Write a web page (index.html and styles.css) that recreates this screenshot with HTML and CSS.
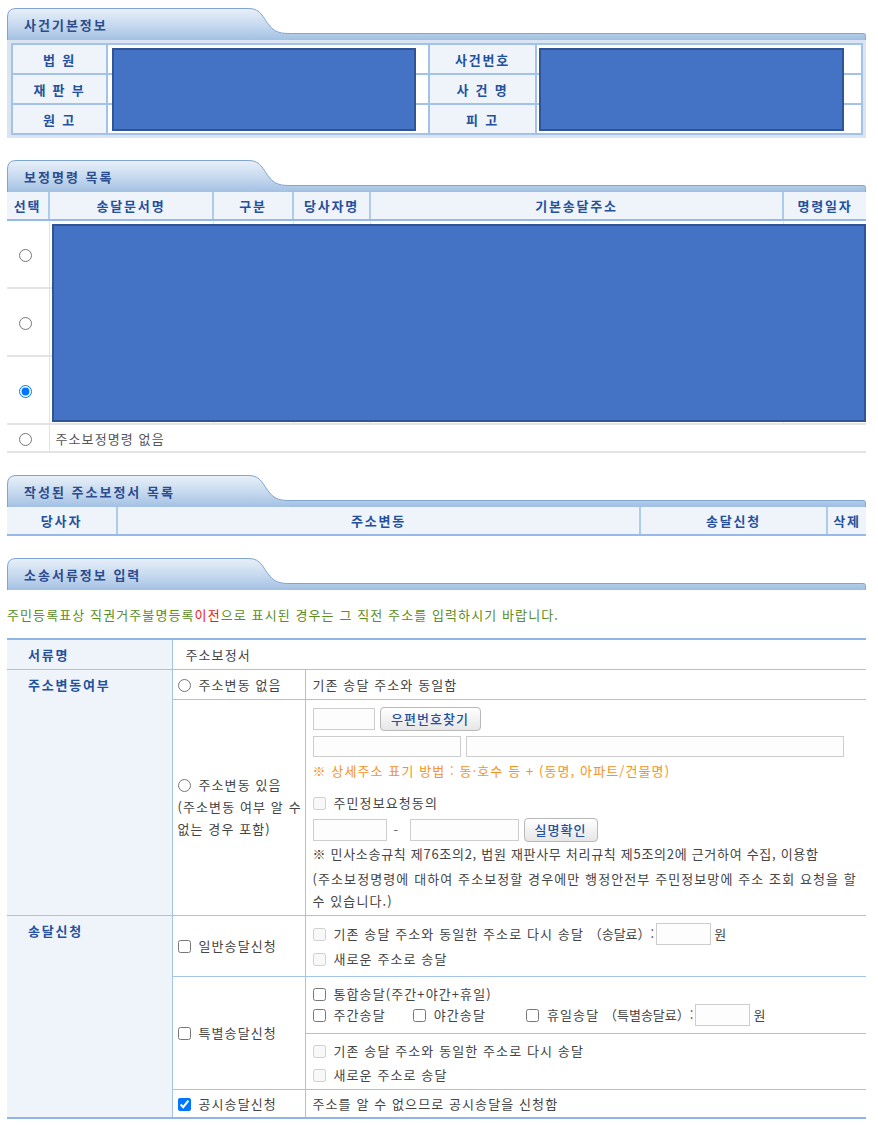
FILE: index.html
```html
<!DOCTYPE html>
<html lang="ko">
<head>
<meta charset="utf-8">
<title>주소보정서</title>
<link rel="stylesheet" href="styles.css">
</head>
<body>
<div class="page">

  <section class="sec">
    <div class="tabhead">
      <div class="tab">
        <svg width="282" height="32" viewBox="0 0 282 32"><defs><linearGradient id="tg1" x1="0" y1="0" x2="0" y2="1"><stop offset="0" stop-color="#e8f0f9"/><stop offset="0.55" stop-color="#c5d8ee"/><stop offset="1" stop-color="#a3c1e3"/></linearGradient></defs><path d="M0.5,32 V9 Q0.5,0.5 9,0.5 H242 C254,0.5 256,10 262,17 C266,22 270,25.5 282,25.5 V32 Z" fill="url(#tg1)"/><path d="M0.5,32 V9 Q0.5,0.5 9,0.5 H242 C254,0.5 256,10 262,17 C266,22 270,25.5 282,25.5" fill="none" stroke="#7fa5d0"/></svg>
        <span class="tab-title">사건기본정보</span>
      </div>
      <div class="bar"></div>
    </div>
    <div class="info-wrap">
      <table class="info">
        <colgroup><col class="c95"><col class="c322"><col class="c107"><col></colgroup>
        <tr><th>법 원</th><td></td><th>사건번호</th><td></td></tr>
        <tr><th>재 판 부</th><td></td><th>사 건 명</th><td></td></tr>
        <tr><th>원 고</th><td></td><th>피 고</th><td></td></tr>
      </table>
      <div class="redact redact-a"></div>
      <div class="redact redact-b"></div>
    </div>
  </section>

  <section class="sec">
    <div class="tabhead">
      <div class="tab">
        <svg width="282" height="32" viewBox="0 0 282 32"><defs><linearGradient id="tg2" x1="0" y1="0" x2="0" y2="1"><stop offset="0" stop-color="#e8f0f9"/><stop offset="0.55" stop-color="#c5d8ee"/><stop offset="1" stop-color="#a3c1e3"/></linearGradient></defs><path d="M0.5,32 V9 Q0.5,0.5 9,0.5 H242 C254,0.5 256,10 262,17 C266,22 270,25.5 282,25.5 V32 Z" fill="url(#tg2)"/><path d="M0.5,32 V9 Q0.5,0.5 9,0.5 H242 C254,0.5 256,10 262,17 C266,22 270,25.5 282,25.5" fill="none" stroke="#7fa5d0"/></svg>
        <span class="tab-title">보정명령 목록</span>
      </div>
      <div class="bar"></div>
    </div>
    <div class="list-wrap">
      <table class="list">
        <colgroup><col class="c42"><col class="c164"><col class="c80"><col class="c77"><col class="c413"><col></colgroup>
        <thead><tr><th>선택</th><th>송달문서명</th><th>구분</th><th>당사자명</th><th>기본송달주소</th><th>명령일자</th></tr></thead>
        <tbody>
          <tr class="tall"><td class="sel"><input type="radio" name="ord"></td><td></td><td></td><td></td><td></td><td></td></tr>
          <tr class="tall"><td class="sel"><input type="radio" name="ord"></td><td></td><td></td><td></td><td></td><td></td></tr>
          <tr class="tall"><td class="sel"><input type="radio" name="ord" checked></td><td></td><td></td><td></td><td></td><td></td></tr>
          <tr class="short"><td class="sel"><input type="radio" name="ord"></td><td colspan="5" class="none">주소보정명령 없음</td></tr>
        </tbody>
      </table>
      <div class="redact redact-c"></div>
    </div>
  </section>

  <section class="sec">
    <div class="tabhead">
      <div class="tab">
        <svg width="282" height="32" viewBox="0 0 282 32"><defs><linearGradient id="tg3" x1="0" y1="0" x2="0" y2="1"><stop offset="0" stop-color="#e8f0f9"/><stop offset="0.55" stop-color="#c5d8ee"/><stop offset="1" stop-color="#a3c1e3"/></linearGradient></defs><path d="M0.5,32 V9 Q0.5,0.5 9,0.5 H242 C254,0.5 256,10 262,17 C266,22 270,25.5 282,25.5 V32 Z" fill="url(#tg3)"/><path d="M0.5,32 V9 Q0.5,0.5 9,0.5 H242 C254,0.5 256,10 262,17 C266,22 270,25.5 282,25.5" fill="none" stroke="#7fa5d0"/></svg>
        <span class="tab-title">작성된 주소보정서 목록</span>
      </div>
      <div class="bar"></div>
    </div>
    <table class="list">
      <colgroup><col class="c110"><col class="c523"><col class="c187"><col></colgroup>
      <thead><tr><th>당사자</th><th>주소변동</th><th>송달신청</th><th>삭제</th></tr></thead>
    </table>
  </section>

  <section class="sec">
    <div class="tabhead">
      <div class="tab">
        <svg width="282" height="32" viewBox="0 0 282 32"><defs><linearGradient id="tg4" x1="0" y1="0" x2="0" y2="1"><stop offset="0" stop-color="#e8f0f9"/><stop offset="0.55" stop-color="#c5d8ee"/><stop offset="1" stop-color="#a3c1e3"/></linearGradient></defs><path d="M0.5,32 V9 Q0.5,0.5 9,0.5 H242 C254,0.5 256,10 262,17 C266,22 270,25.5 282,25.5 V32 Z" fill="url(#tg4)"/><path d="M0.5,32 V9 Q0.5,0.5 9,0.5 H242 C254,0.5 256,10 262,17 C266,22 270,25.5 282,25.5" fill="none" stroke="#7fa5d0"/></svg>
        <span class="tab-title">소송서류정보 입력</span>
      </div>
      <div class="bar"></div>
    </div>

    <p class="notice">주민등록표상 직권거주불명등록<span class="red">이전</span>으로 표시된 경우는 그 직전 주소를 입력하시기 바랍니다.</p>

    <table class="form">
      <colgroup><col class="c165"><col class="c133"><col></colgroup>
      <tr class="r30">
        <th>서류명</th>
        <td colspan="2" class="val">주소보정서</td>
      </tr>
      <tr class="r30">
        <th rowspan="2">주소변동여부</th>
        <td class="mid"><label><input type="radio" name="chg">주소변동 없음</label></td>
        <td class="right">기존 송달 주소와 동일함</td>
      </tr>
      <tr class="r216">
        <td class="mid"><label class="wrap"><input type="radio" name="chg">주소변동 있음<br>(주소변동 여부 알 수 없는 경우 포함)</label></td>
        <td class="right addr">
          <div class="aline l1"><input type="text" class="tx w62"><button type="button" class="btn b101">우편번호찾기</button></div>
          <div class="aline l2"><input type="text" class="tx w148"><input type="text" class="tx w378"></div>
          <div class="orange">※ 상세주소 표기 방법 : 동·호수 등 + (동명, 아파트/건물명)</div>
          <div class="chkline"><label><input type="checkbox" disabled>주민정보요청동의</label></div>
          <div class="aline l3"><input type="text" class="tx w74"><span class="dash">-</span><input type="text" class="tx w109"><button type="button" class="btn b74">실명확인</button></div>
          <p class="law">※ 민사소송규칙 제76조의2, 법원 재판사무 처리규칙 제5조의2에 근거하여 수집, 이용함</p>
          <p class="law2">(주소보정명령에 대하여 주소보정할 경우에만 행정안전부 주민정보망에 주소 조회 요청을 할 수 있습니다.)</p>
        </td>
      </tr>
      <tr class="r61">
        <th rowspan="4">송달신청</th>
        <td class="mid"><label><input type="checkbox">일반송달신청</label></td>
        <td class="right gen">
          <div class="dline"><label><input type="checkbox" disabled>기존 송달 주소와 동일한 주소로 다시 송달 <span class="fee">（송달료）:</span></label><input type="text" class="tx w55"><span class="won">원</span></div>
          <div class="dline"><label><input type="checkbox" disabled>새로운 주소로 송달</label></div>
        </td>
      </tr>
      <tr class="r57">
        <td class="mid" rowspan="2"><label><input type="checkbox">특별송달신청</label></td>
        <td class="right spc">
          <div class="dline s1"><label><input type="checkbox">통합송달(주간+야간+휴일)</label></div>
          <div class="dline s2"><label class="day"><input type="checkbox">주간송달</label><label class="night"><input type="checkbox">야간송달</label><label><input type="checkbox">휴일송달 <span class="fee">（특별송달료）:</span></label><input type="text" class="tx w55"><span class="won">원</span></div>
        </td>
      </tr>
      <tr class="r56">
        <td class="right spc2">
          <div class="dline"><label><input type="checkbox" disabled>기존 송달 주소와 동일한 주소로 다시 송달</label></div>
          <div class="dline"><label><input type="checkbox" disabled>새로운 주소로 송달</label></div>
        </td>
      </tr>
      <tr class="r29">
        <td class="mid"><label><input type="checkbox" checked>공시송달신청</label></td>
        <td class="right">주소를 알 수 없으므로 공시송달을 신청함</td>
      </tr>
    </table>
  </section>

</div>
</body>
</html>
```

FILE: styles.css
```css
* { box-sizing: border-box; }

body {
  margin: 0;
  background: #fff;
  color: #444;
  font-family: "Noto Sans CJK KR", "Noto Sans", sans-serif;
  font-size: 13px;
  letter-spacing: 1.1px;
}

.page {
  width: 859px;
  margin-left: 7px;
  padding-top: 8px;
}

.sec + .sec { margin-top: 22px; }

/* ---------- section tab header ---------- */
.tabhead {
  display: flex;
  align-items: flex-end;
  height: 32px;
}
.tab {
  position: relative;
  flex: none;
  width: 282px;
  height: 32px;
}
.tab svg {
  position: absolute;
  left: 0;
  top: 0;
}
.tab-title {
  position: relative;
  display: block;
  padding: 1px 0 0 17px;
  line-height: 32px;
  font-weight: bold;
  letter-spacing: 2px;
  color: #2b4c8e;
}
.bar {
  flex: 1;
  height: 7px;
  border-top: 1px solid #7fa5d0;
  border-right: 1px solid #8aabd3;
  border-radius: 0 3px 0 0;
  background: linear-gradient(#b2cce8, #a0bee1);
}

/* ---------- widths ---------- */
.c95 { width: 95px; }
.c322 { width: 322px; }
.c107 { width: 107px; }
.c42 { width: 42px; }
.c164 { width: 164px; }
.c80 { width: 80px; }
.c77 { width: 77px; }
.c413 { width: 413px; }
.c110 { width: 110px; }
.c523 { width: 523px; }
.c187 { width: 187px; }
.c165 { width: 165px; }
.c133 { width: 133px; }

/* ---------- basic info ---------- */
.info-wrap {
  position: relative;
  background: #dbe5f1;
  padding: 3px 3px 3px 4px;
}
.info {
  width: 100%;
  border-collapse: collapse;
  table-layout: fixed;
  background: #fff;
}
.info th,
.info td {
  height: 30px;
  padding: 0;
  border: 2px solid #a3c2eb;
}
.info th {
  background: #eff4fb;
  color: #24519d;
  font-weight: bold;
  letter-spacing: 1.8px;
  text-align: center;
}

.redact {
  position: absolute;
  background: #4472c4;
  border: 2px solid #2f5597;
}
.redact-a { left: 105px; top: 8px; width: 304px; height: 83px; }
.redact-b { left: 532px; top: 8px; width: 305px; height: 83px; }
.redact-c { left: 45px; top: 32px; right: 0; height: 198px; }

/* ---------- list tables ---------- */
.list-wrap { position: relative; }
.list {
  width: 100%;
  border-collapse: collapse;
  table-layout: fixed;
}
.list thead th {
  height: 28px;
  padding: 0;
  background: #eff4fb;
  color: #24519d;
  font-weight: bold;
  letter-spacing: 1.8px;
  text-align: center;
  border-left: 2px solid #aecbee;
  border-bottom: 2px solid #96b9e8;
}
.list thead th:first-child { border-left: none; }
.list tbody td {
  padding: 0;
  border-left: 1px solid #e3e3e3;
  border-bottom: 2px solid #e3e3e3;
}
.list tbody td:first-child { border-left: none; }
.list tr.tall td { height: 68px; }
.list tr.short td { height: 28px; }
.list td.sel { text-align: center; padding-right: 4px; }
.list td.sel input { margin: 0; vertical-align: middle; }
.list td.none { padding-left: 6px; color: #555; }

/* ---------- notice ---------- */
.notice {
  margin: 16px 0 0;
  line-height: 18px;
  color: #5b8d1e;
}
.red { color: #f01818; }

/* ---------- form table ---------- */
.form {
  width: 100%;
  margin-top: 14px;
  border-collapse: collapse;
  table-layout: fixed;
  border-top: 2px solid #8fb4e6;
  border-bottom: 2px solid #8fb4e6;
}
.form th {
  padding: 6px 0 0 21px;
  vertical-align: top;
  text-align: left;
  line-height: 17px;
  background: #eff4fb;
  color: #24519d;
  font-weight: bold;
  letter-spacing: 1.8px;
  border-top: 1px solid #a4c3ea;
}
.form td {
  padding: 0;
  vertical-align: middle;
  border-top: 1px solid #a4c3ea;
  border-left: 1px solid #a4c3ea;
  color: #444;
}
.form tr.r30 > * { height: 30px; }
.form tr.r216 > * { height: 216px; }
.form tr.r61 > * { height: 61px; }
.form tr.r57 > * { height: 57px; }
.form tr.r56 > * { height: 56px; }
.form tr.r29 > * { height: 29px; }

.form td.val { padding-left: 13px; }
.form td.mid { padding-left: 5px; }
.form td.right { padding-left: 7px; }

.form input[type="radio"],
.form input[type="checkbox"] {
  width: 13px;
  height: 13px;
  margin: 0 8px 0 0;
  vertical-align: -2px;
}

.form label.wrap {
  display: block;
  line-height: 22px;
}

/* address block */
.form td.addr {
  vertical-align: top;
  padding-top: 7px;
}
.aline {
  display: flex;
  align-items: center;
  gap: 5px;
}
.aline.l1 { height: 24px; }
.aline.l2 { height: 21px; margin-top: 5px; }
.aline.l3 { height: 24px; margin-top: 5px; }
.orange {
  margin-top: 4px;
  line-height: 20px;
  color: #f7921e;
}
.chkline {
  margin-top: 12px;
  line-height: 20px;
}
.dash {
  width: 6px;
  margin: 0 5px 0 2px;
  color: #666;
}
.law {
  margin: 2px 0 0;
  line-height: 20px;
  color: #444;
  letter-spacing: 0.7px;
}
.law2 {
  margin: 4px 0 0;
  line-height: 22px;
  color: #444;
}

.tx {
  height: 22px;
  padding: 0 3px;
  border: 1px solid #cdcdcd;
  background: #fdfdfd;
  font: inherit;
}
.aline.l2 .tx { height: 21px; }
.w55 { width: 55px; }
.w62 { width: 62px; }
.w74 { width: 74px; }
.w109 { width: 109px; }
.w148 { width: 148px; }
.w378 { width: 378px; }

.btn {
  height: 24px;
  padding: 0;
  border: 1px solid #b8b8b8;
  border-radius: 4px;
  background: linear-gradient(#ffffff, #e6e6e6);
  color: #23519f;
  font-family: inherit;
  font-size: 13px;
  font-weight: 500;
  letter-spacing: 1px;
}
.b101 { width: 101px; }
.b74 { width: 74px; }

/* delivery rows */
.dline {
  display: flex;
  align-items: center;
  height: 22px;
  white-space: nowrap;
}
.fee { letter-spacing: 0; }
.dline .tx { margin-left: 2px; }
.won { margin-left: 3px; }
.gen { vertical-align: top !important; padding-top: 7px !important; }
.gen .dline + .dline { margin-top: 3px; }
.spc { vertical-align: top !important; padding-top: 7px !important; }
.spc .dline.s1 { height: 20px; }
.spc .dline.s2 { height: 22px; }
.day { margin-right: 27px; }
.night { margin-right: 40px; }
.spc2 { vertical-align: top !important; padding-top: 6px !important; }
.spc2 .dline + .dline { margin-top: 2px; }
```
